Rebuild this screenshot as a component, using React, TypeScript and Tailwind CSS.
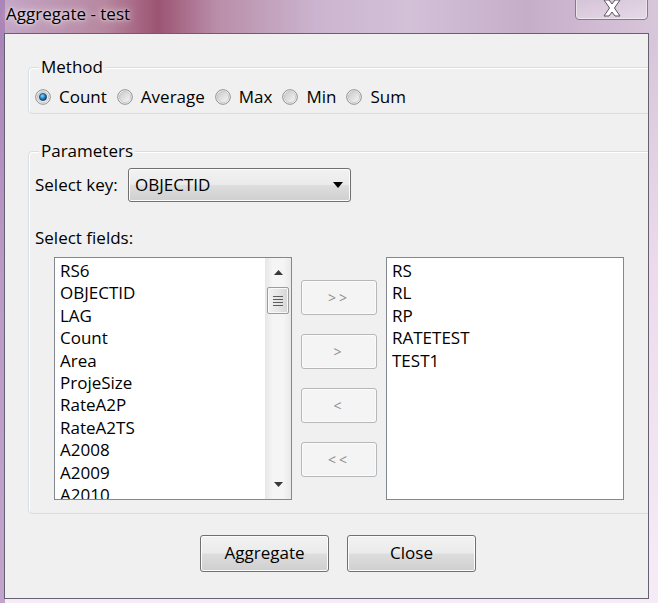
import React from "react";

const leftFields = [
  "RS6",
  "OBJECTID",
  "LAG",
  "Count",
  "Area",
  "ProjeSize",
  "RateA2P",
  "RateA2TS",
  "A2008",
  "A2009",
  "A2010",
];

const rightFields = ["RS", "RL", "RP", "RATETEST", "TEST1"];

const methods = ["Count", "Average", "Max", "Min", "Sum"];

const Radio = ({ checked }: { checked?: boolean }) => (
  <svg width="16" height="16" viewBox="0 0 16 16" className="shrink-0">
    <defs>
      <linearGradient id="ring" x1="0" y1="0" x2="1" y2="1">
        <stop offset="0" stopColor="#c9c9c9" />
        <stop offset="1" stopColor="#f7f7f7" />
      </linearGradient>
      <radialGradient id="dot" cx="40%" cy="35%" r="65%">
        <stop offset="0" stopColor="#8fdcff" />
        <stop offset="0.5" stopColor="#2a8ad4" />
        <stop offset="1" stopColor="#0b3f6e" />
      </radialGradient>
    </defs>
    <circle cx="8" cy="8" r="7.3" fill="#f4f4f4" stroke="#8d8d8d" strokeWidth="1" />
    <circle cx="8" cy="8" r="5.6" fill="url(#ring)" stroke="#bdbdbd" strokeWidth="0.7" />
    {checked && <circle cx="8" cy="8" r="3.6" fill="url(#dot)" stroke="#123c5e" strokeWidth="0.7" />}
  </svg>
);

const GroupBox = ({
  legend,
  className,
  children,
}: {
  legend: string;
  className?: string;
  children: React.ReactNode;
}) => (
  <div
    className={
      "relative ml-[23px] w-[640px] shrink-0 rounded-[4px] border border-[#d5dfe5] shadow-[inset_1px_1px_0_#ffffff] " +
      (className ?? "")
    }
  >
    <span className="absolute left-[10px] -top-[12px] bg-[#f0f0f0] px-[2px] leading-[22px] text-black">
      {legend}
    </span>
    {children}
  </div>
);

const ArrowButton = ({ label }: { label: string }) => (
  <div className="flex h-[35px] w-[76px] items-center justify-center rounded-[3px] border border-[#b4b8bb] bg-[#f4f4f4] text-[14px] tracking-[3px] text-[#8f8f8f] shadow-[inset_0_0_0_1px_#fbfbfb]">
    {label}
  </div>
);

const DialogButton = ({ label }: { label: string }) => (
  <div className="flex h-[37px] w-[129px] items-center justify-center rounded-[3px] border border-[#707070] bg-[linear-gradient(180deg,#f2f2f2_0%,#ebebeb_48%,#dddddd_52%,#cfcfcf_100%)] pb-[2px] text-black shadow-[inset_0_0_0_1px_#fcfcfc]">
    {label}
  </div>
);

const Scrollbar = () => (
  <div className="flex h-full w-[26px] shrink-0 flex-col items-center bg-[linear-gradient(90deg,#e6e6e6_0%,#f5f5f5_30%,#f5f5f5_70%,#e9e9e9_100%)]">
    <div className="flex h-[29px] w-full items-center justify-center">
      <svg width="9" height="5" viewBox="0 0 9 5">
        <path d="M4.5 0 L9 5 L0 5 Z" fill="#3a3a3a" />
      </svg>
    </div>
    <div className="flex h-[27px] w-[22px] flex-col items-center justify-center gap-[2px] rounded-[2px] border border-[#9c9c9c] bg-[linear-gradient(90deg,#f1f1f1_0%,#e6e6e6_50%,#d6d6d6_100%)] shadow-[inset_0_0_0_1px_#f8f8f8]">
      <span className="h-px w-[10px] bg-[#5c5c5c]" />
      <span className="h-px w-[10px] bg-[#5c5c5c]" />
      <span className="h-px w-[10px] bg-[#5c5c5c]" />
      <span className="h-px w-[10px] bg-[#5c5c5c]" />
    </div>
    <div className="flex-1" />
    <div className="flex h-[29px] w-full items-center justify-center">
      <svg width="9" height="5" viewBox="0 0 9 5">
        <path d="M0 0 L9 0 L4.5 5 Z" fill="#3a3a3a" />
      </svg>
    </div>
  </div>
);

const ListBox = ({ items, scroll }: { items: string[]; scroll?: boolean }) => (
  <div className="flex h-[243px] w-[238px] shrink-0 overflow-hidden border border-[#828790] bg-white">
    <div className="flex-1 overflow-hidden pl-[5px] pt-[2px] leading-[22.4px] text-black">
      {items.map((item) => (
        <div key={item} className="whitespace-nowrap">
          {item}
        </div>
      ))}
    </div>
    {scroll && <Scrollbar />}
  </div>
);

export default function App() {
  return (
    <div
      className="flex h-[603px] w-[658px] flex-col overflow-hidden bg-[linear-gradient(90deg,rgba(150,105,170,0.55)_0px,rgba(150,105,170,0.55)_5px,transparent_5px),linear-gradient(180deg,rgba(246,234,246,0)_0%,rgba(246,234,246,0)_7%,rgba(240,222,240,0.85)_45%,#f6ecf6_100%),linear-gradient(90deg,#c4a8c8_0%,#b7879f_16%,#9c5473_24%,#b98ea9_33%,#cbb4cf_48%,#d3c1d8_62%,#c6aec9_80%,#d8c6da_100%)] text-[17px]"
      style={{ fontFamily: '"Open Sans", "Noto Sans", sans-serif' }}
    >
      <div className="relative h-[33px] shrink-0">
        <div className="pl-[6px] pt-[3px] leading-[22px] text-black [text-shadow:0_0_8px_rgba(255,255,255,0.9),0_0_3px_rgba(255,255,255,0.7)]">
          Aggregate - test
        </div>
        <div className="absolute left-[575px] -top-[4px] flex h-[24px] w-[73px] items-end justify-center rounded-b-[4px] border border-[#8c7590] bg-[linear-gradient(180deg,rgba(255,255,255,0.15),rgba(255,255,255,0.35))] shadow-[inset_0_0_0_1px_rgba(255,255,255,0.45)]">
          <svg width="22" height="18" viewBox="0 0 22 18" className="mb-[1px]">
            <path
              d="M3 0 L8 0 L11 4 L14 0 L19 0 L13.5 8 L19 16 L14 16 L11 12 L8 16 L3 16 L8.5 8 Z"
              fill="#ffffff"
              stroke="#5b5160"
              strokeWidth="1"
              strokeLinejoin="round"
            />
          </svg>
        </div>
      </div>

      <div className="ml-[4px] flex h-[566px] w-[645px] shrink-0 flex-col overflow-hidden border border-[#646270] bg-[#f0f0f0]">
        <GroupBox legend="Method" className="mt-[33px] h-[47px] pl-[6px] pt-[18px]">
          <div className="flex items-center gap-[10px] leading-[22px] text-black">
            {methods.map((m, idx) => (
              <div key={m} className="flex items-center gap-[8px]">
                <Radio checked={idx === 0} />
                <span>{m}</span>
              </div>
            ))}
          </div>
        </GroupBox>

        <GroupBox legend="Parameters" className="mt-[37px] h-[363px] pl-[6px] pt-[16px]">
          <div className="flex items-center leading-[22px] text-black">
            <span className="w-[93px]">Select key:</span>
            <div className="flex h-[34px] w-[223px] items-center justify-between rounded-[3px] border border-[#707070] bg-[linear-gradient(180deg,#f2f2f2_0%,#ebebeb_48%,#dddddd_52%,#cfcfcf_100%)] pl-[6px] pr-[7px] shadow-[inset_0_0_0_1px_#fcfcfc]">
              <span>OBJECTID</span>
              <svg width="10" height="6" viewBox="0 0 10 6">
                <path d="M0 0 L10 0 L5 6 Z" fill="#000" />
              </svg>
            </div>
          </div>
          <div className="mt-[25px] leading-[22px] text-black">Select fields:</div>
          <div className="ml-[19px] mt-[8px] flex items-start">
            <ListBox items={leftFields} scroll />
            <div className="ml-[9px] mt-[23px] flex flex-col gap-[19px]">
              <ArrowButton label=">>" />
              <ArrowButton label=">" />
              <ArrowButton label="<" />
              <ArrowButton label="<<" />
            </div>
            <div className="ml-[9px]">
              <ListBox items={rightFields} />
            </div>
          </div>
        </GroupBox>

        <div className="ml-[195px] mt-[21px] flex gap-[18px]">
          <DialogButton label="Aggregate" />
          <DialogButton label="Close" />
        </div>
      </div>
    </div>
  );
}
